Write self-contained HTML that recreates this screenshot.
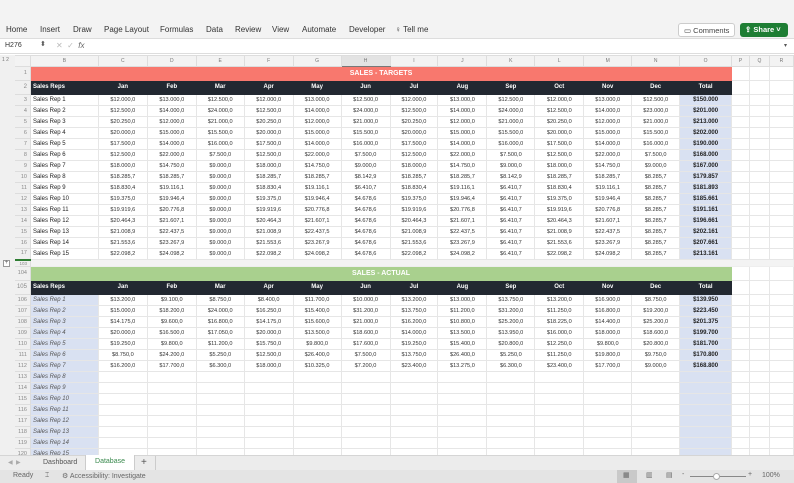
<!DOCTYPE html>
<html><head><meta charset="utf-8"><style>
*{margin:0;padding:0;box-sizing:border-box}
body{width:794px;height:483px;overflow:hidden;background:#fff;font-family:"Liberation Sans",sans-serif;position:relative}
.top{position:absolute;left:0;top:0;width:794px;height:38px;background:#f3f3f3}
.menu{position:absolute;top:25px;font-size:8px;color:#333}
.fb{position:absolute;top:38px;left:0;width:794px;height:16px;background:#fff;border-top:1px solid #ddd;border-bottom:1px solid #ddd}
table{position:absolute;left:0;top:55px;border-collapse:collapse;table-layout:fixed}
td{height:11px;font-size:5.6px;color:#333;border:1px solid #e6e6e6;text-align:center;white-space:nowrap;overflow:hidden;line-height:9px;padding:0}
td.a{background:#f0f0f0;color:#888;border-color:#ddd;font-size:5.5px;text-align:right;padding-right:3px}
tr.ch td{background:#f3f3f3;color:#777;font-size:5px;border-color:#ddd}
td.b{text-align:left;padding-left:2px;font-size:6px;color:#222}
td.t{background:#d9e1f2;font-weight:bold;font-size:6px;color:#222}
tr.hd td{background:#222831;color:#fff;font-weight:bold;font-size:6px;border-color:#222831;height:14px}
tr.hd td.a{background:#f0f0f0;color:#888;font-weight:normal;border-color:#ddd}
tr.hd td.e{background:#fff;border-color:#e6e6e6}
td.i{background:#d9e1f2;font-style:italic;color:#555;text-align:left;padding-left:2px;font-size:6px}
td.e{background:#fff}
</style></head><body>
<div class="top">
<span class="menu" style="left:6px">Home</span><span class="menu" style="left:40px">Insert</span><span class="menu" style="left:73px">Draw</span><span class="menu" style="left:104px">Page Layout</span><span class="menu" style="left:160px">Formulas</span><span class="menu" style="left:206px">Data</span><span class="menu" style="left:235px">Review</span><span class="menu" style="left:272px">View</span><span class="menu" style="left:302px">Automate</span><span class="menu" style="left:349px">Developer</span><span class="menu" style="left:395px">♀ Tell me</span>
<div style="position:absolute;left:678px;top:23px;width:57px;height:14px;border:1px solid #ccc;border-radius:3px;background:#fff;font-size:7.5px;color:#444;padding:2px 0 0 5px">▭ Comments</div>
<div style="position:absolute;left:740px;top:23px;width:48px;height:14px;border-radius:3px;background:#1e7e34;font-size:7.5px;color:#fff;font-weight:bold;padding:2px 0 0 5px">⇪ Share ˅</div>
</div>
<div class="fb"><span style="position:absolute;left:5px;top:3px;font-size:7px;color:#333">H276</span><span style="position:absolute;left:40px;top:1px;font-size:7px;color:#555">⬍</span><span style="position:absolute;left:56px;top:2px;font-size:8px;color:#bbb">✕ &nbsp;✓ &nbsp;<i style="color:#666">fx</i></span><span style="position:absolute;left:784px;top:3px;font-size:6px;color:#555">▾</span></div>
<table>
<colgroup><col style="width:30px"><col style="width:68px"><col style="width:49px"><col style="width:49px"><col style="width:48px"><col style="width:49px"><col style="width:48px"><col style="width:49px"><col style="width:48px"><col style="width:49px"><col style="width:48px"><col style="width:49px"><col style="width:48px"><col style="width:48px"><col style="width:52px"><col style="width:18px"><col style="width:20px"><col style="width:24px"></colgroup>
<tr class="ch"><td class="a"></td><td>B</td><td>C</td><td>D</td><td>E</td><td>F</td><td>G</td><td style="background:#e3e3e3;border-bottom:1px solid #777">H</td><td>I</td><td>J</td><td>K</td><td>L</td><td>M</td><td>N</td><td>O</td><td>P</td><td>Q</td><td>R</td></tr>
<tr><td class="a" style="height:14px">1</td><td colspan="14" style="background:#f8786e;color:#fff;font-weight:bold;font-size:7px;border-color:#f8786e">SALES - TARGETS</td><td class="e"></td><td class="e"></td><td class="e"></td></tr>
<tr class="hd"><td class="a">2</td><td style="text-align:left;padding-left:2px">Sales Reps</td><td>Jan</td><td>Feb</td><td>Mar</td><td>Apr</td><td>May</td><td>Jun</td><td>Jul</td><td>Aug</td><td>Sep</td><td>Oct</td><td>Nov</td><td>Dec</td><td>Total</td><td class="e"></td><td class="e"></td><td class="e"></td></tr>
<tr><td class="a">3</td><td class="b">Sales Rep 1</td><td>$12.000,0</td><td>$13.000,0</td><td>$12.500,0</td><td>$12.000,0</td><td>$13.000,0</td><td>$12.500,0</td><td>$12.000,0</td><td>$13.000,0</td><td>$12.500,0</td><td>$12.000,0</td><td>$13.000,0</td><td>$12.500,0</td><td class="t">$150.000</td><td></td><td></td><td></td></tr>
<tr><td class="a">4</td><td class="b">Sales Rep 2</td><td>$12.500,0</td><td>$14.000,0</td><td>$24.000,0</td><td>$12.500,0</td><td>$14.000,0</td><td>$24.000,0</td><td>$12.500,0</td><td>$14.000,0</td><td>$24.000,0</td><td>$12.500,0</td><td>$14.000,0</td><td>$23.000,0</td><td class="t">$201.000</td><td></td><td></td><td></td></tr>
<tr><td class="a">5</td><td class="b">Sales Rep 3</td><td>$20.250,0</td><td>$12.000,0</td><td>$21.000,0</td><td>$20.250,0</td><td>$12.000,0</td><td>$21.000,0</td><td>$20.250,0</td><td>$12.000,0</td><td>$21.000,0</td><td>$20.250,0</td><td>$12.000,0</td><td>$21.000,0</td><td class="t">$213.000</td><td></td><td></td><td></td></tr>
<tr><td class="a">6</td><td class="b">Sales Rep 4</td><td>$20.000,0</td><td>$15.000,0</td><td>$15.500,0</td><td>$20.000,0</td><td>$15.000,0</td><td>$15.500,0</td><td>$20.000,0</td><td>$15.000,0</td><td>$15.500,0</td><td>$20.000,0</td><td>$15.000,0</td><td>$15.500,0</td><td class="t">$202.000</td><td></td><td></td><td></td></tr>
<tr><td class="a">7</td><td class="b">Sales Rep 5</td><td>$17.500,0</td><td>$14.000,0</td><td>$16.000,0</td><td>$17.500,0</td><td>$14.000,0</td><td>$16.000,0</td><td>$17.500,0</td><td>$14.000,0</td><td>$16.000,0</td><td>$17.500,0</td><td>$14.000,0</td><td>$16.000,0</td><td class="t">$190.000</td><td></td><td></td><td></td></tr>
<tr><td class="a">8</td><td class="b">Sales Rep 6</td><td>$12.500,0</td><td>$22.000,0</td><td>$7.500,0</td><td>$12.500,0</td><td>$22.000,0</td><td>$7.500,0</td><td>$12.500,0</td><td>$22.000,0</td><td>$7.500,0</td><td>$12.500,0</td><td>$22.000,0</td><td>$7.500,0</td><td class="t">$168.000</td><td></td><td></td><td></td></tr>
<tr><td class="a">9</td><td class="b">Sales Rep 7</td><td>$18.000,0</td><td>$14.750,0</td><td>$9.000,0</td><td>$18.000,0</td><td>$14.750,0</td><td>$9.000,0</td><td>$18.000,0</td><td>$14.750,0</td><td>$9.000,0</td><td>$18.000,0</td><td>$14.750,0</td><td>$9.000,0</td><td class="t">$167.000</td><td></td><td></td><td></td></tr>
<tr><td class="a">10</td><td class="b">Sales Rep 8</td><td>$18.285,7</td><td>$18.285,7</td><td>$9.000,0</td><td>$18.285,7</td><td>$18.285,7</td><td>$8.142,9</td><td>$18.285,7</td><td>$18.285,7</td><td>$8.142,9</td><td>$18.285,7</td><td>$18.285,7</td><td>$8.285,7</td><td class="t">$179.857</td><td></td><td></td><td></td></tr>
<tr><td class="a">11</td><td class="b">Sales Rep 9</td><td>$18.830,4</td><td>$19.116,1</td><td>$9.000,0</td><td>$18.830,4</td><td>$19.116,1</td><td>$6.410,7</td><td>$18.830,4</td><td>$19.116,1</td><td>$6.410,7</td><td>$18.830,4</td><td>$19.116,1</td><td>$8.285,7</td><td class="t">$181.893</td><td></td><td></td><td></td></tr>
<tr><td class="a">12</td><td class="b">Sales Rep 10</td><td>$19.375,0</td><td>$19.946,4</td><td>$9.000,0</td><td>$19.375,0</td><td>$19.946,4</td><td>$4.678,6</td><td>$19.375,0</td><td>$19.946,4</td><td>$6.410,7</td><td>$19.375,0</td><td>$19.946,4</td><td>$8.285,7</td><td class="t">$185.661</td><td></td><td></td><td></td></tr>
<tr><td class="a">13</td><td class="b">Sales Rep 11</td><td>$19.919,6</td><td>$20.776,8</td><td>$9.000,0</td><td>$19.919,6</td><td>$20.776,8</td><td>$4.678,6</td><td>$19.919,6</td><td>$20.776,8</td><td>$6.410,7</td><td>$19.919,6</td><td>$20.776,8</td><td>$8.285,7</td><td class="t">$191.161</td><td></td><td></td><td></td></tr>
<tr><td class="a">14</td><td class="b">Sales Rep 12</td><td>$20.464,3</td><td>$21.607,1</td><td>$9.000,0</td><td>$20.464,3</td><td>$21.607,1</td><td>$4.678,6</td><td>$20.464,3</td><td>$21.607,1</td><td>$6.410,7</td><td>$20.464,3</td><td>$21.607,1</td><td>$8.285,7</td><td class="t">$196.661</td><td></td><td></td><td></td></tr>
<tr><td class="a">15</td><td class="b">Sales Rep 13</td><td>$21.008,9</td><td>$22.437,5</td><td>$9.000,0</td><td>$21.008,9</td><td>$22.437,5</td><td>$4.678,6</td><td>$21.008,9</td><td>$22.437,5</td><td>$6.410,7</td><td>$21.008,9</td><td>$22.437,5</td><td>$8.285,7</td><td class="t">$202.161</td><td></td><td></td><td></td></tr>
<tr><td class="a">16</td><td class="b">Sales Rep 14</td><td>$21.553,6</td><td>$23.267,9</td><td>$9.000,0</td><td>$21.553,6</td><td>$23.267,9</td><td>$4.678,6</td><td>$21.553,6</td><td>$23.267,9</td><td>$6.410,7</td><td>$21.553,6</td><td>$23.267,9</td><td>$8.285,7</td><td class="t">$207.661</td><td></td><td></td><td></td></tr>
<tr><td class="a">17</td><td class="b">Sales Rep 15</td><td>$22.098,2</td><td>$24.098,2</td><td>$9.000,0</td><td>$22.098,2</td><td>$24.098,2</td><td>$4.678,6</td><td>$22.098,2</td><td>$24.098,2</td><td>$6.410,7</td><td>$22.098,2</td><td>$24.098,2</td><td>$8.285,7</td><td class="t">$213.161</td><td></td><td></td><td></td></tr>
<tr><td class="a" style="height:7px;font-size:4.5px;line-height:5px;border-top:2px solid #2e7d32">103</td><td colspan="17" style="height:7px;background:#f3f3f3;border-color:#eee"></td></tr>
<tr><td class="a" style="height:14px">104</td><td colspan="14" style="background:#a9d08e;color:#fff;font-weight:bold;font-size:7px;border-color:#a9d08e">SALES - ACTUAL</td><td></td><td></td><td></td></tr>
<tr class="hd"><td class="a">105</td><td style="text-align:left;padding-left:2px">Sales Reps</td><td>Jan</td><td>Feb</td><td>Mar</td><td>Apr</td><td>May</td><td>Jun</td><td>Jul</td><td>Aug</td><td>Sep</td><td>Oct</td><td>Nov</td><td>Dec</td><td>Total</td><td class="e"></td><td class="e"></td><td class="e"></td></tr>
<tr><td class="a">106</td><td class="i">Sales Rep 1</td><td>$13.200,0</td><td>$9.100,0</td><td>$8.750,0</td><td>$8.400,0</td><td>$11.700,0</td><td>$10.000,0</td><td>$13.200,0</td><td>$13.000,0</td><td>$13.750,0</td><td>$13.200,0</td><td>$16.900,0</td><td>$8.750,0</td><td class="t">$139.950</td><td></td><td></td><td></td></tr>
<tr><td class="a">107</td><td class="i">Sales Rep 2</td><td>$15.000,0</td><td>$18.200,0</td><td>$24.000,0</td><td>$16.250,0</td><td>$15.400,0</td><td>$31.200,0</td><td>$13.750,0</td><td>$11.200,0</td><td>$31.200,0</td><td>$11.250,0</td><td>$16.800,0</td><td>$19.200,0</td><td class="t">$223.450</td><td></td><td></td><td></td></tr>
<tr><td class="a">108</td><td class="i">Sales Rep 3</td><td>$14.175,0</td><td>$9.600,0</td><td>$16.800,0</td><td>$14.175,0</td><td>$15.600,0</td><td>$21.000,0</td><td>$16.200,0</td><td>$10.800,0</td><td>$25.200,0</td><td>$18.225,0</td><td>$14.400,0</td><td>$25.200,0</td><td class="t">$201.375</td><td></td><td></td><td></td></tr>
<tr><td class="a">109</td><td class="i">Sales Rep 4</td><td>$20.000,0</td><td>$16.500,0</td><td>$17.050,0</td><td>$20.000,0</td><td>$13.500,0</td><td>$18.600,0</td><td>$14.000,0</td><td>$13.500,0</td><td>$13.950,0</td><td>$16.000,0</td><td>$18.000,0</td><td>$18.600,0</td><td class="t">$199.700</td><td></td><td></td><td></td></tr>
<tr><td class="a">110</td><td class="i">Sales Rep 5</td><td>$19.250,0</td><td>$9.800,0</td><td>$11.200,0</td><td>$15.750,0</td><td>$9.800,0</td><td>$17.600,0</td><td>$19.250,0</td><td>$15.400,0</td><td>$20.800,0</td><td>$12.250,0</td><td>$9.800,0</td><td>$20.800,0</td><td class="t">$181.700</td><td></td><td></td><td></td></tr>
<tr><td class="a">111</td><td class="i">Sales Rep 6</td><td>$8.750,0</td><td>$24.200,0</td><td>$5.250,0</td><td>$12.500,0</td><td>$26.400,0</td><td>$7.500,0</td><td>$13.750,0</td><td>$26.400,0</td><td>$5.250,0</td><td>$11.250,0</td><td>$19.800,0</td><td>$9.750,0</td><td class="t">$170.800</td><td></td><td></td><td></td></tr>
<tr><td class="a">112</td><td class="i">Sales Rep 7</td><td>$16.200,0</td><td>$17.700,0</td><td>$6.300,0</td><td>$18.000,0</td><td>$10.325,0</td><td>$7.200,0</td><td>$23.400,0</td><td>$13.275,0</td><td>$6.300,0</td><td>$23.400,0</td><td>$17.700,0</td><td>$9.000,0</td><td class="t">$168.800</td><td></td><td></td><td></td></tr>
<tr><td class="a">113</td><td class="i">Sales Rep 8</td><td></td><td></td><td></td><td></td><td></td><td></td><td></td><td></td><td></td><td></td><td></td><td></td><td class="t"></td><td></td><td></td><td></td></tr>
<tr><td class="a">114</td><td class="i">Sales Rep 9</td><td></td><td></td><td></td><td></td><td></td><td></td><td></td><td></td><td></td><td></td><td></td><td></td><td class="t"></td><td></td><td></td><td></td></tr>
<tr><td class="a">115</td><td class="i">Sales Rep 10</td><td></td><td></td><td></td><td></td><td></td><td></td><td></td><td></td><td></td><td></td><td></td><td></td><td class="t"></td><td></td><td></td><td></td></tr>
<tr><td class="a">116</td><td class="i">Sales Rep 11</td><td></td><td></td><td></td><td></td><td></td><td></td><td></td><td></td><td></td><td></td><td></td><td></td><td class="t"></td><td></td><td></td><td></td></tr>
<tr><td class="a">117</td><td class="i">Sales Rep 12</td><td></td><td></td><td></td><td></td><td></td><td></td><td></td><td></td><td></td><td></td><td></td><td></td><td class="t"></td><td></td><td></td><td></td></tr>
<tr><td class="a">118</td><td class="i">Sales Rep 13</td><td></td><td></td><td></td><td></td><td></td><td></td><td></td><td></td><td></td><td></td><td></td><td></td><td class="t"></td><td></td><td></td><td></td></tr>
<tr><td class="a">119</td><td class="i">Sales Rep 14</td><td></td><td></td><td></td><td></td><td></td><td></td><td></td><td></td><td></td><td></td><td></td><td></td><td class="t"></td><td></td><td></td><td></td></tr>
<tr><td class="a">120</td><td class="i">Sales Rep 15</td><td></td><td></td><td></td><td></td><td></td><td></td><td></td><td></td><td></td><td></td><td></td><td></td><td class="t"></td><td></td><td></td><td></td></tr>
</table>
<div style="position:absolute;left:0;top:55px;width:15px;height:400px;background:#f0f0f0"></div>
<div style="position:absolute;left:2px;top:57px;font-size:5px;color:#777">1 2</div>
<div style="position:absolute;left:3px;top:260px;width:7px;height:7px;border:1px solid #999;font-size:6px;line-height:5px;text-align:center;color:#555;background:#fff">+</div>
<div style="position:absolute;left:0;top:455px;width:794px;height:15px;background:#ececec;border-top:1px solid #d5d5d5">
<span style="position:absolute;left:8px;top:3px;font-size:6px;color:#aaa">◀ &nbsp;▶</span>
<span style="position:absolute;left:43px;top:3px;font-size:7px;color:#555">Dashboard</span>
<div style="position:absolute;left:85px;top:-1px;width:50px;height:15px;background:#fff;border-left:1px solid #ccc;border-right:1px solid #ccc;font-size:7px;color:#3a8a4e;text-align:center;padding-top:3px">Database</div>
<span style="position:absolute;left:141px;top:1px;font-size:10px;color:#555">+</span>
<div style="position:absolute;left:155px;top:0;width:1px;height:14px;background:#ccc"></div>
</div>
<div style="position:absolute;left:0;top:470px;width:794px;height:13px;background:#e4e4e4;font-size:7px;color:#666">
<span style="position:absolute;left:13px;top:2px">Ready</span>
<span style="position:absolute;left:45px;top:2px">⌶</span>
<span style="position:absolute;left:62px;top:2px">⚙ Accessibility: Investigate</span>
<div style="position:absolute;left:617px;top:0;width:20px;height:13px;background:#c9c9c9"></div>
<span style="position:absolute;left:623px;top:1px">▦</span><span style="position:absolute;left:646px;top:1px">▥</span><span style="position:absolute;left:666px;top:1px">▤</span>
<span style="position:absolute;left:682px;top:1px">-</span>
<div style="position:absolute;left:690px;top:6px;width:56px;height:1px;background:#888"></div>
<div style="position:absolute;left:713px;top:3px;width:7px;height:7px;border-radius:50%;background:#fff;border:1px solid #aaa"></div>
<span style="position:absolute;left:748px;top:1px">+</span>
<span style="position:absolute;left:762px;top:2px">100%</span>
</div>
</body></html>
